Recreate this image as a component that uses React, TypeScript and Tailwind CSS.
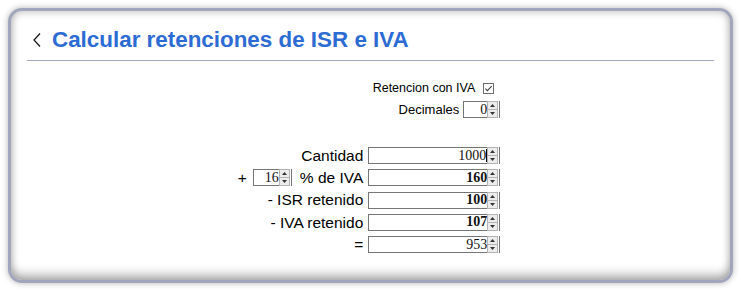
import { ReactNode } from "react";

function Spin() {
    return <div className="flex flex-col w-[11px] h-full border border-[#b4b4b4] bg-[#ececec]">
        <div className="flex-1 flex items-center justify-center border-b border-[#b4b4b4]">
            <svg width="5" height="3" viewBox="0 0 5 3"><path d="M0 3 L2.5 0 L5 3 Z" fill="#333" /></svg>
        </div>
        <div className="flex-1 flex items-center justify-center">
            <svg width="5" height="3" viewBox="0 0 5 3"><path d="M0 0 L2.5 3 L5 0 Z" fill="#333" /></svg>
        </div>
    </div>
}

function NumBox({ value, width, bold, caret }: { value: string; width: string; bold?: boolean; caret?: boolean }) {
    return <div className="flex h-[17px] items-stretch">
        <div className={`${width} flex items-center justify-end border-l border-t border-b border-[#767676] bg-white text-[14px] text-[#111] leading-none ${bold ? "font-bold" : ""}`}
            style={{ fontFamily: '"Liberation Serif", serif' }}>
            <span>{value}</span>
            {caret && <span className="w-px h-[13px] bg-black" />}
        </div>
        <Spin />
        <div className="w-px ml-px bg-[#767676]" />
    </div>
}

function Row({ label, children }: { label: ReactNode; children: ReactNode }) {
    return <>
        <div className="flex items-center justify-end text-[15.5px] text-black leading-none">{label}</div>
        <div className="flex items-center">{children}</div>
    </>
}

export default function App() {
    return <div className="bg-white p-2 w-[741px] h-[291px]" style={{ fontFamily: '"Liberation Sans", Arial, sans-serif' }}>
        <div className="h-full rounded-[14px] border-[3px] border-[#a2a6bc] bg-white shadow-[0_0_6px_rgba(0,0,0,0.3),inset_0_0_8px_rgba(0,0,0,0.3),inset_0_-9px_10px_-2px_rgba(0,0,0,0.2)] flex flex-col">
            <div className="flex items-center pt-4 pl-[22px]">
                <svg width="8" height="14" viewBox="0 0 8 14" className="shrink-0">
                    <path d="M7 0.5 L1 7 L7 13.5" fill="none" stroke="#111" strokeWidth="1.2" />
                </svg>
                <h1 className="ml-[11px] text-[22.4px] leading-[25px] font-bold text-[#2d6bd4]">Calcular retenciones de ISR e IVA</h1>
            </div>
            <div className="mx-4 mt-2 border-t border-[#a4a8be]" />

            <div className="mx-auto w-fit flex flex-col mt-[19px] pr-[3px]">
                <div className="flex flex-col items-end gap-[5px] text-[12.5px] leading-none text-black">
                    <div className="flex items-center h-4 gap-[8px] pr-[6px]">
                        <span>Retencion con IVA</span>
                        <svg width="11" height="11" viewBox="0 0 11 11">
                            <rect x="0.5" y="0.5" width="10" height="10" fill="#fff" stroke="#6d6d6d" />
                            <path d="M2.3 5.6 L4.4 7.7 L8.7 3.2" fill="none" stroke="#444" strokeWidth="1.1" />
                        </svg>
                    </div>
                    <div className="flex items-center gap-[4px]">
                        <span className="text-[13px]">Decimales</span>
                        <NumBox value="0" width="w-[24px]" />
                    </div>
                </div>

                <div className="grid grid-cols-[auto_auto] gap-x-[5px] gap-y-[5.25px] mt-[29px]">
                    <Row label="Cantidad"><NumBox value="1000" width="w-[119px]" caret /></Row>
                    <Row label={<>
                        <span>+</span>
                        <div className="ml-[6px] mr-[8px]"><NumBox value="16" width="w-[26px]" /></div>
                        <span>% de IVA</span>
                    </>}><NumBox value="160" width="w-[119px]" bold /></Row>
                    <Row label="- ISR retenido"><NumBox value="100" width="w-[119px]" bold /></Row>
                    <Row label="- IVA retenido"><NumBox value="107" width="w-[119px]" bold /></Row>
                    <Row label="="><NumBox value="953" width="w-[119px]" /></Row>
                </div>
            </div>
        </div>
    </div>
}
